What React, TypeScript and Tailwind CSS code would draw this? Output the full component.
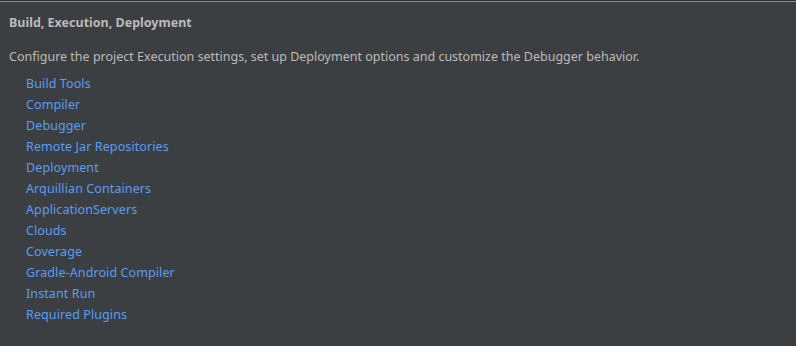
export default function App() {
  const links = [
    "Build Tools",
    "Compiler",
    "Debugger",
    "Remote Jar Repositories",
    "Deployment",
    "Arquillian Containers",
    "ApplicationServers",
    "Clouds",
    "Coverage",
    "Gradle-Android Compiler",
    "Instant Run",
    "Required Plugins",
  ];

  return (
    <div
      className="w-[796px] h-[346px] bg-[#3c3f41] border-t border-t-[#2b2b2b] overflow-hidden"
      style={{ fontFamily: '"Noto Sans", "Open Sans", sans-serif' }}
    >
      <div className="h-px bg-[#8c8c8c]" />
      <div className="pl-[9px] pt-[12px]">
        <h1 className="text-[12.5px] leading-[18px] font-bold text-[#bbbbbb]">
          Build, Execution, Deployment
        </h1>
        <p className="mt-[16px] text-[12.5px] leading-[18px] text-[#bbbbbb]">
          Configure the project Execution settings, set up Deployment options and customize the Debugger behavior.
        </p>
        <ul className="mt-[7px] pl-[17px] flex flex-col">
          {links.map((l) => (
            <li key={l} className="text-[12.5px] leading-[21px] tracking-[0.1px] text-[#589df6] cursor-pointer">
              {l}
            </li>
          ))}
        </ul>
      </div>
    </div>
  );
}
